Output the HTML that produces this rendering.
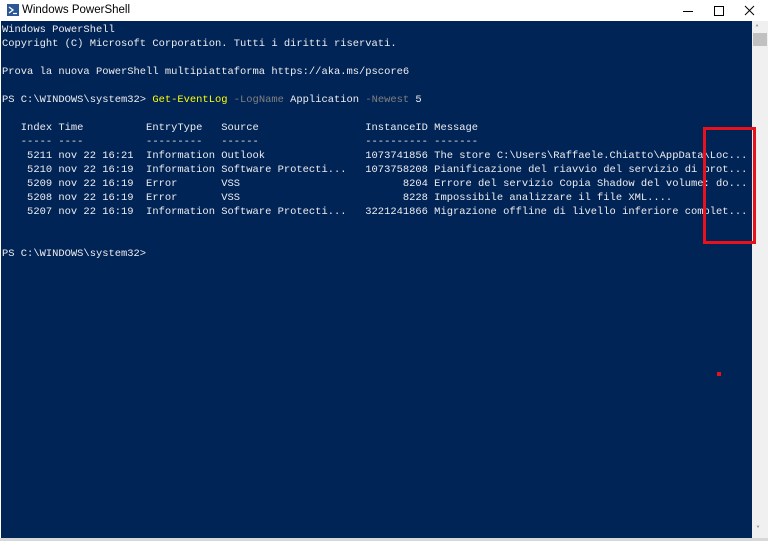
<!DOCTYPE html>
<html><head><style>
html,body{margin:0;padding:0;width:768px;height:541px;overflow:hidden;background:#fff;}
#title{position:absolute;left:0;top:0;width:768px;height:21px;background:#fff;font-family:"Liberation Sans",sans-serif;font-size:11.5px;color:#000;}
#title .t{position:absolute;left:22px;top:4px;}
#con{position:absolute;left:1px;top:21px;width:751px;height:517px;background:#012456;}
pre{margin:0;position:absolute;left:1px;top:2px;font-family:"Liberation Mono",monospace;font-size:10.45px;line-height:14px;color:#eeedf0;}
.y{color:#ffff00}.g{color:#808080}
#sb{position:absolute;left:752px;top:21px;width:16px;height:517px;background:#f0f0f0;}
#thumb{position:absolute;left:753px;top:33px;width:14px;height:13px;background:#c1c1c1;}
#bot{position:absolute;left:0;top:538px;width:768px;height:3px;background:#d8d8d8;}
</style></head><body>
<div id="title">
<svg style="position:absolute;left:7px;top:4px" width="12" height="12"><rect x="0" y="0" width="12" height="12" fill="#2b5797"/><path d="M2 3 L6 6 L2 9" stroke="#fff" stroke-width="1.3" fill="none"/><path d="M6 9.5 H10" stroke="#fff" stroke-width="1.2"/></svg>
<span class="t">Windows PowerShell</span>
<svg style="position:absolute;left:682px;top:4px" width="80" height="14"><path d="M1 7.5 H11" stroke="#000" stroke-width="1"/><rect x="32.5" y="2.5" width="9" height="9" stroke="#000" fill="none"/><path d="M63 2 L72 11 M72 2 L63 11" stroke="#000" stroke-width="1"/></svg>
</div>
<div id="con"><pre>Windows PowerShell
Copyright (C) Microsoft Corporation. Tutti i diritti riservati.

Prova la nuova PowerShell multipiattaforma https://aka.ms/pscore6

PS C:\WINDOWS\system32&gt; <span class="y">Get-EventLog</span> <span class="g">-LogName</span> Application <span class="g">-Newest</span> 5

   Index Time          EntryType   Source                 InstanceID Message
   ----- ----          ---------   ------                 ---------- -------
    5211 nov 22 16:21  Information Outlook                1073741856 The store C:\Users\Raffaele.Chiatto\AppData\Loc...
    5210 nov 22 16:19  Information Software Protecti...   1073758208 Pianificazione del riavvio del servizio di prot...
    5209 nov 22 16:19  Error       VSS                          8204 Errore del servizio Copia Shadow del volume: do...
    5208 nov 22 16:19  Error       VSS                          8228 Impossibile analizzare il file XML....
    5207 nov 22 16:19  Information Software Protecti...   3221241866 Migrazione offline di livello inferiore complet...


PS C:\WINDOWS\system32&gt;</pre></div>
<div id="sb"></div><div id="thumb"></div>
<div style="position:absolute;left:755px;top:24px;font-size:8px;color:#606060;font-family:'DejaVu Sans',sans-serif">&#x2C4;</div>
<div style="position:absolute;left:756px;top:525px;font-size:8px;color:#606060;font-family:'DejaVu Sans',sans-serif">&#x2C5;</div>
<div id="bot"></div>
<div style="position:absolute;left:703px;top:127px;width:47px;height:111px;border:3px solid #e8121c;"></div>
<div style="position:absolute;left:717px;top:372px;width:4px;height:4px;background:#e8121c;"></div>
</body></html>
